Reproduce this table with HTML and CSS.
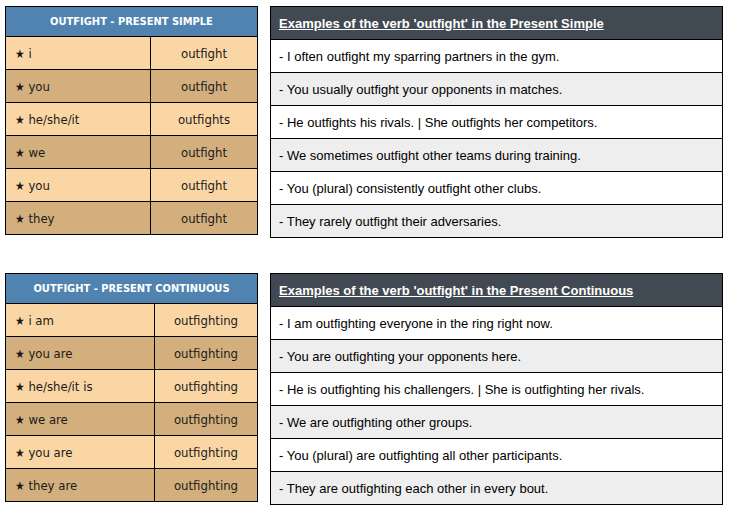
FILE: index.html
```html
<!DOCTYPE html>
<html>
<head>
<meta charset="utf-8">
<link rel="stylesheet" href="styles.css">
</head>
<body>
<div class="block">
  <table class="conj conj-simple">
    <tr><th colspan="2">OUTFIGHT - PRESENT SIMPLE</th></tr>
    <tr class="light"><td class="pron"><span class="star">★</span> i</td><td class="form">outfight</td></tr>
    <tr class="dark"><td class="pron"><span class="star">★</span> you</td><td class="form">outfight</td></tr>
    <tr class="light"><td class="pron"><span class="star">★</span> he/she/it</td><td class="form">outfights</td></tr>
    <tr class="dark"><td class="pron"><span class="star">★</span> we</td><td class="form">outfight</td></tr>
    <tr class="light"><td class="pron"><span class="star">★</span> you</td><td class="form">outfight</td></tr>
    <tr class="dark"><td class="pron"><span class="star">★</span> they</td><td class="form">outfight</td></tr>
  </table>
  <table class="examples">
    <tr><th><span class="ul">Examples of the verb 'outfight' in the Present Simple</span></th></tr>
    <tr class="white"><td>- I often outfight my sparring partners in the gym.</td></tr>
    <tr class="grey"><td>- You usually outfight your opponents in matches.</td></tr>
    <tr class="white"><td>- He outfights his rivals. | She outfights her competitors.</td></tr>
    <tr class="grey"><td>- We sometimes outfight other teams during training.</td></tr>
    <tr class="white"><td>- You (plural) consistently outfight other clubs.</td></tr>
    <tr class="grey"><td>- They rarely outfight their adversaries.</td></tr>
  </table>
</div>
<div class="block">
  <table class="conj conj-cont">
    <tr><th colspan="2">OUTFIGHT - PRESENT CONTINUOUS</th></tr>
    <tr class="light"><td class="pron"><span class="star">★</span> i am</td><td class="form">outfighting</td></tr>
    <tr class="dark"><td class="pron"><span class="star">★</span> you are</td><td class="form">outfighting</td></tr>
    <tr class="light"><td class="pron"><span class="star">★</span> he/she/it is</td><td class="form">outfighting</td></tr>
    <tr class="dark"><td class="pron"><span class="star">★</span> we are</td><td class="form">outfighting</td></tr>
    <tr class="light"><td class="pron"><span class="star">★</span> you are</td><td class="form">outfighting</td></tr>
    <tr class="dark"><td class="pron"><span class="star">★</span> they are</td><td class="form">outfighting</td></tr>
  </table>
  <table class="examples">
    <tr><th><span class="ul">Examples of the verb 'outfight' in the Present Continuous</span></th></tr>
    <tr class="white"><td>- I am outfighting everyone in the ring right now.</td></tr>
    <tr class="grey"><td>- You are outfighting your opponents here.</td></tr>
    <tr class="white"><td>- He is outfighting his challengers. | She is outfighting her rivals.</td></tr>
    <tr class="grey"><td>- We are outfighting other groups.</td></tr>
    <tr class="white"><td>- You (plural) are outfighting all other participants.</td></tr>
    <tr class="grey"><td>- They are outfighting each other in every bout.</td></tr>
  </table>
</div>
</body>
</html>
```
FILE: styles.css
```css
html, body {
  margin: 0;
  background: #ffffff;
}
body {
  padding: 6px 5px 0 5px;
}
.block {
  display: flex;
  align-items: flex-start;
  gap: 12px;
  margin-bottom: 35px;
}
.block:last-child {
  margin-bottom: 0;
}
table {
  border-collapse: collapse;
  border: 1px solid #000;
}
td, th {
  border: 1px solid #000;
  padding: 0;
}
.conj {
  width: 253px;
  font-family: "DejaVu Sans Condensed", "DejaVu Sans", sans-serif;
  font-size: 13px;
  color: #1a1a1a;
}
.conj th {
  background: #5083b0;
  color: #ffffff;
  font-weight: bold;
  font-size: 11px;
  height: 29px;
  text-align: center;
}
.conj td {
  height: 32px;
}
.conj-simple .pron { width: 135px; }
.conj-cont .pron { width: 139px; }
.pron {
  padding-left: 9px;
  text-align: left;
}
.form {
  text-align: center;
}
.star {
  font-size: 12px;
}
.light td { background: #fad6a5; }
.dark td { background: #d3af7e; }
.examples {
  width: 453px;
  font-family: "Liberation Sans", Arial, sans-serif;
  font-size: 13px;
  color: #000;
}
.examples th {
  background: #414a52;
  color: #ffffff;
  font-weight: bold;
  text-align: left;
  height: 32px;
  padding-left: 8px;
}
.ul { text-decoration: underline; }
.examples td {
  height: 32px;
  padding-left: 8px;
}
.white td { background: #ffffff; }
.grey td { background: #eeeeee; }
```
